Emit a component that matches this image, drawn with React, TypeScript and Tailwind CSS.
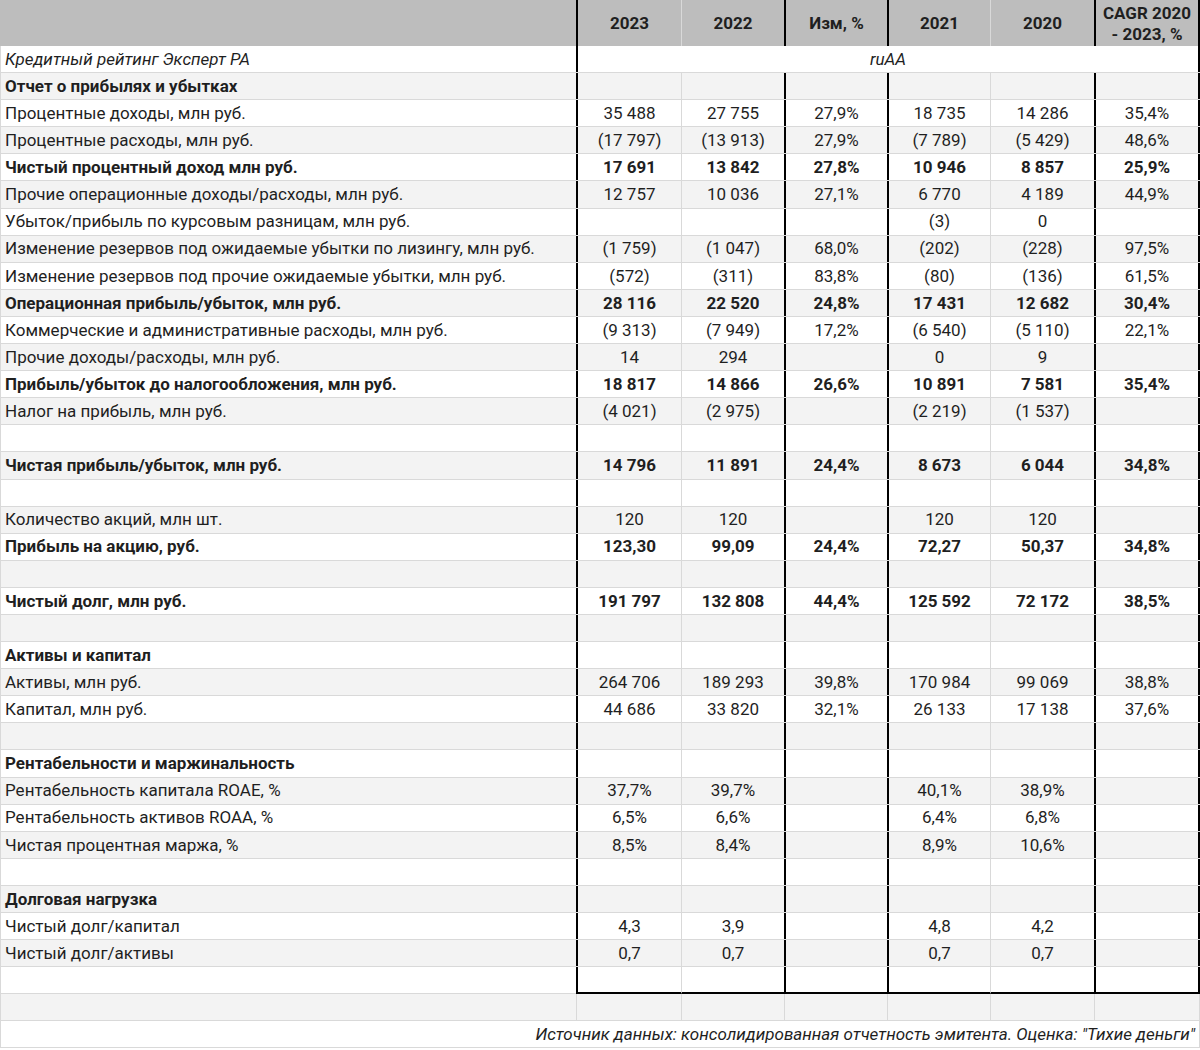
type Row = {
  label: string;
  bold?: boolean;
  values?: string[];
};

const rows: Row[] = [
  { label: "Отчет о прибылях и убытках", bold: true, values: ["", "", "", "", "", ""] },
  { label: "Процентные доходы, млн руб.", values: ["35 488", "27 755", "27,9%", "18 735", "14 286", "35,4%"] },
  { label: "Процентные расходы, млн руб.", values: ["(17 797)", "(13 913)", "27,9%", "(7 789)", "(5 429)", "48,6%"] },
  { label: "Чистый процентный доход млн руб.", bold: true, values: ["17 691", "13 842", "27,8%", "10 946", "8 857", "25,9%"] },
  { label: "Прочие операционные доходы/расходы, млн руб.", values: ["12 757", "10 036", "27,1%", "6 770", "4 189", "44,9%"] },
  { label: "Убыток/прибыль по курсовым разницам, млн руб.", values: ["", "", "", "(3)", "0", ""] },
  { label: "Изменение резервов под ожидаемые убытки по лизингу, млн руб.", values: ["(1 759)", "(1 047)", "68,0%", "(202)", "(228)", "97,5%"] },
  { label: "Изменение резервов под прочие ожидаемые убытки, млн руб.", values: ["(572)", "(311)", "83,8%", "(80)", "(136)", "61,5%"] },
  { label: "Операционная прибыль/убыток, млн руб.", bold: true, values: ["28 116", "22 520", "24,8%", "17 431", "12 682", "30,4%"] },
  { label: "Коммерческие и административные расходы, млн руб.", values: ["(9 313)", "(7 949)", "17,2%", "(6 540)", "(5 110)", "22,1%"] },
  { label: "Прочие доходы/расходы, млн руб.", values: ["14", "294", "", "0", "9", ""] },
  { label: "Прибыль/убыток до налогообложения, млн руб.", bold: true, values: ["18 817", "14 866", "26,6%", "10 891", "7 581", "35,4%"] },
  { label: "Налог на прибыль, млн руб.", values: ["(4 021)", "(2 975)", "", "(2 219)", "(1 537)", ""] },
  { label: "" },
  { label: "Чистая прибыль/убыток, млн руб.", bold: true, values: ["14 796", "11 891", "24,4%", "8 673", "6 044", "34,8%"] },
  { label: "" },
  { label: "Количество акций, млн шт.", values: ["120", "120", "", "120", "120", ""] },
  { label: "Прибыль на акцию, руб.", bold: true, values: ["123,30", "99,09", "24,4%", "72,27", "50,37", "34,8%"] },
  { label: "" },
  { label: "Чистый долг, млн руб.", bold: true, values: ["191 797", "132 808", "44,4%", "125 592", "72 172", "38,5%"] },
  { label: "" },
  { label: "Активы и капитал", bold: true },
  { label: "Активы, млн руб.", values: ["264 706", "189 293", "39,8%", "170 984", "99 069", "38,8%"] },
  { label: "Капитал, млн руб.", values: ["44 686", "33 820", "32,1%", "26 133", "17 138", "37,6%"] },
  { label: "" },
  { label: "Рентабельности и маржинальность", bold: true },
  { label: "Рентабельность капитала ROAE, %", values: ["37,7%", "39,7%", "", "40,1%", "38,9%", ""] },
  { label: "Рентабельность активов ROAA, %", values: ["6,5%", "6,6%", "", "6,4%", "6,8%", ""] },
  { label: "Чистая процентная маржа, %", values: ["8,5%", "8,4%", "", "8,9%", "10,6%", ""] },
  { label: "" },
  { label: "Долговая нагрузка", bold: true },
  { label: "Чистый долг/капитал", values: ["4,3", "3,9", "", "4,8", "4,2", ""] },
  { label: "Чистый долг/активы", values: ["0,7", "0,7", "", "0,7", "0,7", ""] },
  { label: "" },
];

// column boxes: width + left border style
const cols = [
  "w-[105px] border-l-2 border-l-black",
  "w-[103px] border-l border-l-[#d9d9d9]",
  "w-[103px] border-l-2 border-l-black",
  "w-[103px] border-l-2 border-l-black",
  "w-[104px] border-l border-l-[#d9d9d9]",
  "w-[106px] border-l-2 border-l-black border-r-2 border-r-black",
];

const plainCols = [
  "w-[105px] border-l border-l-[#d9d9d9]",
  "w-[103px] border-l border-l-[#d9d9d9]",
  "w-[103px] border-l border-l-[#d9d9d9]",
  "w-[103px] border-l border-l-[#d9d9d9]",
  "w-[104px] border-l border-l-[#d9d9d9]",
  "w-[106px] border-l border-l-[#d9d9d9] border-r border-r-[#d9d9d9]",
];

const headers = ["2023", "2022", "Изм, %", "2021", "2020"];

export default function App() {
  return (
    <div className="w-[1200px] h-[1050px] bg-white text-[17px] text-[#1f1f1f] font-['Roboto','Liberation_Sans',sans-serif] overflow-hidden">
      {/* Header */}
      <div className="flex h-[46px] bg-[#bdbdbd]">
        <div className="w-[576px] shrink-0" />
        {cols.map((c, i) => (
          <div
            key={i}
            className={`${c} shrink-0 flex items-center justify-center text-center font-bold leading-[21px] pt-[1px]`}
          >
            {i < 5 ? (
              headers[i]
            ) : (
              <span>
                CAGR 2020
                <br />- 2023, %
              </span>
            )}
          </div>
        ))}
      </div>

      {/* Rating row */}
      <div className="flex h-[27.1px] bg-white border-b border-b-[#d9d9d9]">
        <div className="w-[576px] shrink-0 border-l border-l-[#d9d9d9] pl-[4px] pt-[1px] flex items-center italic">
          Кредитный рейтинг Эксперт РА
        </div>
        <div className="w-[624px] shrink-0 border-l-2 border-l-black border-r-2 border-r-black pt-[1px] flex items-center justify-center italic">
          ruAA
        </div>
      </div>

      {rows.map((r, idx) => {
        const i = idx + 1;
        const last = idx === rows.length - 1;
        const vals = r.values ?? ["", "", "", "", "", ""];
        return (
          <div
            key={idx}
            className={`flex h-[27.1px] border-b border-b-[#d9d9d9] ${
              i % 2 === 1 ? "bg-[#f3f3f3]" : "bg-white"
            }`}
          >
            <div
              className={`w-[576px] shrink-0 border-l border-l-[#d9d9d9] pl-[4px] pt-[1px] flex items-center whitespace-nowrap ${
                r.bold ? "font-bold" : ""
              }`}
            >
              {r.label}
            </div>
            {cols.map((c, ci) => (
              <div
                key={ci}
                className={`${c} shrink-0 flex items-center justify-center pt-[1px] whitespace-nowrap ${
                  r.bold ? "font-bold" : ""
                } ${last ? "border-b-2 border-b-black -mb-px" : ""}`}
              >
                {vals[ci]}
              </div>
            ))}
          </div>
        );
      })}

      {/* Spacer row outside the box */}
      <div className="flex h-[27.1px] bg-[#f3f3f3] border-b border-b-[#d9d9d9]">
        <div className="w-[576px] shrink-0 border-l border-l-[#d9d9d9]" />
        {plainCols.map((c, ci) => (
          <div key={ci} className={`${c} shrink-0`} />
        ))}
      </div>

      {/* Source */}
      <div className="flex h-[27.1px] bg-white border-b border-b-[#d9d9d9] border-l border-l-[#d9d9d9] border-r border-r-[#d9d9d9] items-center justify-end pr-[4px] pt-[1px] italic whitespace-nowrap">
        Источник данных: консолидированная отчетность эмитента. Оценка: "Тихие деньги"
      </div>
    </div>
  );
}
